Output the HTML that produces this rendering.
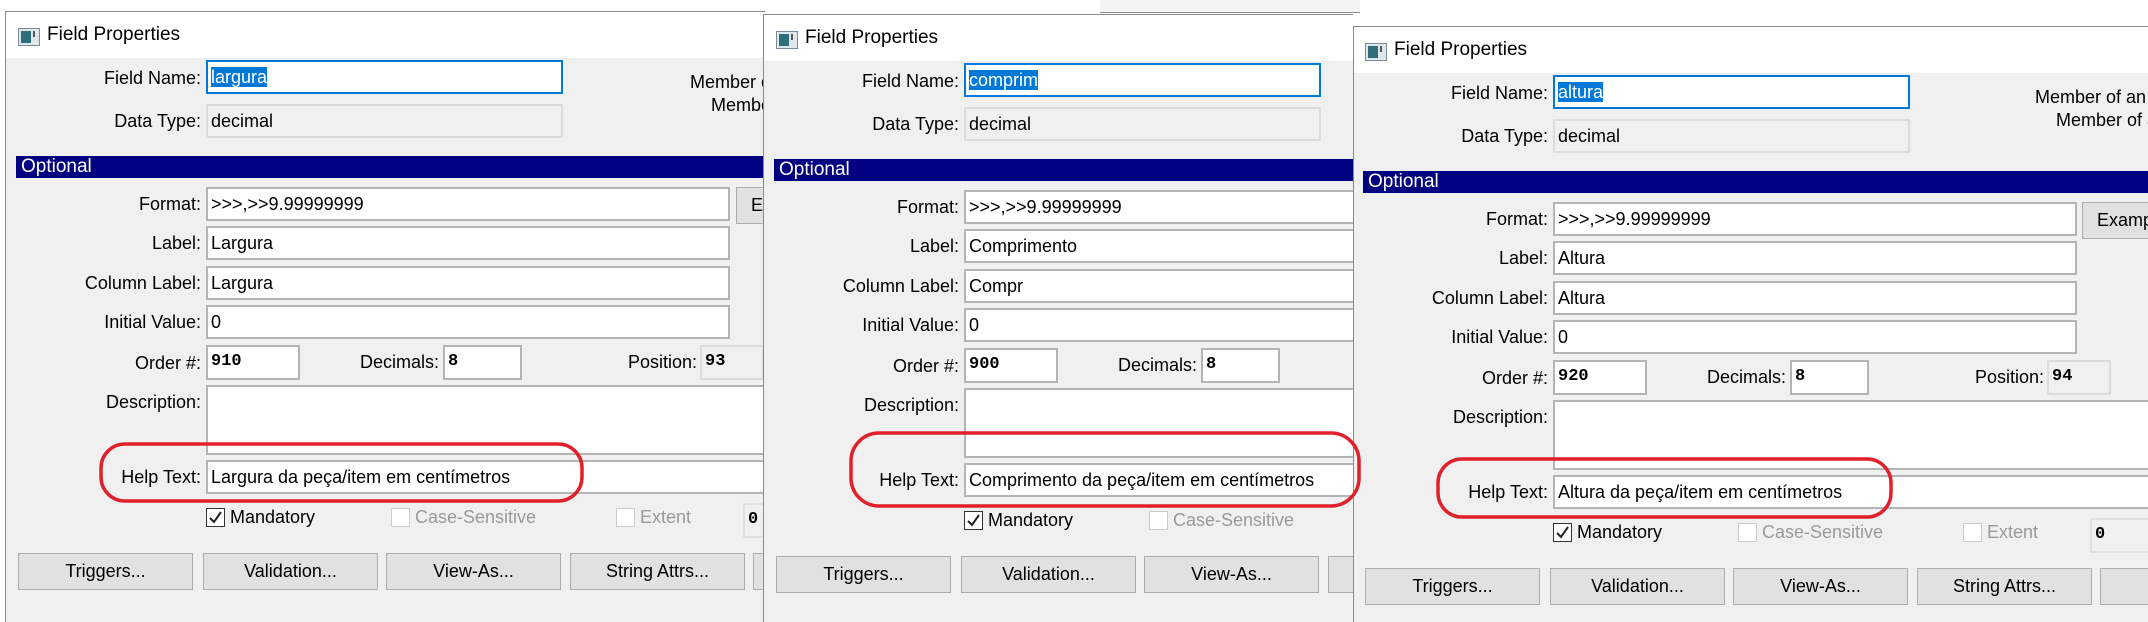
<!DOCTYPE html>
<html><head><meta charset="utf-8"><style>
*{margin:0;padding:0;box-sizing:border-box}
html,body{width:2148px;height:622px;overflow:hidden}
body{position:relative;background:#fff;font-family:"Liberation Sans",Arial,sans-serif;font-size:18px;color:#000}
.win{position:absolute;overflow:hidden;border-left:1px solid #8a8a8a;border-top:1px solid #8a8a8a;background:#f0f0f0}
.in{position:absolute;width:1000px;height:600px}
.a{position:absolute;white-space:nowrap}
.tb{position:absolute;left:0;top:0;width:1000px;height:46px;background:#fff}
.lb{position:absolute;width:200px;left:1px;text-align:right;height:34px;line-height:34px}
.rl{position:absolute;width:150px;text-align:right;height:35px;line-height:35px}
.ip{position:absolute;background:#fff;border:2px solid #b4b4b4;height:34px;line-height:30px;padding-left:3px;white-space:nowrap;overflow:hidden}
.ro{background:#f0f0f0;border:2px solid #dcdcdc}
.bold{font-family:"Liberation Mono",monospace;font-weight:bold;font-size:17px}
.opt{position:absolute;left:16px;top:156px;width:1000px;height:22px;background:#000080;color:#fff;line-height:22px;padding-left:5px;font-size:19px}
.btn{position:absolute;top:553px;width:175px;height:37px;background:#e1e1e1;border:1px solid #adadad;text-align:center;line-height:35px}
.cb{position:absolute;width:19px;height:19px;border:1px solid #333;background:#fff;top:508px}
.cbd{border-color:#ccc}
.gray{color:#9a9a9a}
</style></head><body>
<div class="a" style="left:1100px;top:0;width:260px;height:13px;border-bottom:1px solid #888;background:#f4f4f4"></div>

<!-- panel 1 -->
<div class="win" style="left:5px;top:11px;width:760px;height:611px">
<div class="in" style="left:-6px;top:-12px">
<div class="tb" style="top:12px"></div>
<svg class="a" style="left:18px;top:28px" width="22" height="18"><rect x="0.5" y="0.5" width="21" height="17" fill="#dfe6ec" stroke="#7a8a99"/><rect x="3" y="3" width="10" height="12" fill="#2d6e7a"/><rect x="15" y="3" width="2" height="6" fill="#555"/></svg>
<div class="a" style="left:47px;top:24px;font-size:19px">Field Properties</div>
<div class="lb" style="top:61px">Field Name:</div>
<div class="ip" style="left:206px;top:60px;width:357px;border-color:#0078d7"><span style="background:#0078d7;color:#fff">largura</span></div>
<div class="lb" style="top:104px">Data Type:</div>
<div class="ip ro" style="left:206px;top:104px;width:357px">decimal</div>
<div class="a" style="left:690px;top:72px">Member of an Index</div>
<div class="a" style="left:711px;top:95px">Member of a Word Index</div>
<div class="opt">Optional</div>
<div class="lb" style="top:187px">Format:</div><div class="ip" style="left:206px;top:187px;width:524px">&gt;&gt;&gt;,&gt;&gt;9.99999999</div>
<div class="btn" style="left:736px;top:187px;width:120px;text-align:left;padding-left:14px">Example...</div>
<div class="lb" style="top:226px">Label:</div><div class="ip" style="left:206px;top:226px;width:524px">Largura</div>
<div class="lb" style="top:266px">Column Label:</div><div class="ip" style="left:206px;top:266px;width:524px">Largura</div>
<div class="lb" style="top:305px">Initial Value:</div><div class="ip" style="left:206px;top:305px;width:524px">0</div>
<div class="lb" style="top:346px">Order #:</div><div class="ip bold" style="left:206px;top:345px;width:94px;height:35px">910</div>
<div class="rl" style="left:289px;top:345px">Decimals:</div><div class="ip bold" style="left:443px;top:345px;width:79px;height:35px">8</div>
<div class="rl" style="left:547px;top:345px">Position:</div><div class="ip ro bold" style="left:700px;top:345px;width:64px;height:35px">93</div>
<div class="lb" style="top:385px">Description:</div><div class="ip" style="left:206px;top:385px;width:800px;height:70px"></div>
<div class="lb" style="top:460px">Help Text:</div><div class="ip" style="left:206px;top:460px;width:800px">Largura da peça/item em centímetros</div>
<div class="cb" style="left:206px">
<svg width="17" height="17" style="position:absolute;left:0;top:0"><path d="M3 9 L7 13 L14 3" stroke="#222" stroke-width="2" fill="none"/></svg></div>
<div class="a" style="left:230px;top:507px">Mandatory</div>
<div class="cb cbd" style="left:391px"></div><div class="a gray" style="left:415px;top:507px">Case-Sensitive</div>
<div class="cb cbd" style="left:616px"></div><div class="a gray" style="left:640px;top:507px">Extent</div>
<div class="ip ro bold" style="left:743px;top:503px;width:60px;height:35px;border-color:#e0e0e0">0</div>
<div class="btn" style="left:18px">Triggers...</div>
<div class="btn" style="left:203px">Validation...</div>
<div class="btn" style="left:386px">View-As...</div>
<div class="btn" style="left:570px">String Attrs...</div>
<div class="btn gray" style="left:753px">Delete</div>
</div></div>

<!-- panel 2 -->
<div class="win" style="left:763px;top:14px;width:590px;height:608px">
<div class="in" style="left:-6px;top:-12px">
<div class="tb" style="top:12px"></div>
<svg class="a" style="left:18px;top:28px" width="22" height="18"><rect x="0.5" y="0.5" width="21" height="17" fill="#dfe6ec" stroke="#7a8a99"/><rect x="3" y="3" width="10" height="12" fill="#2d6e7a"/><rect x="15" y="3" width="2" height="6" fill="#555"/></svg>
<div class="a" style="left:47px;top:24px;font-size:19px">Field Properties</div>
<div class="lb" style="top:61px">Field Name:</div>
<div class="ip" style="left:206px;top:60px;width:357px;border-color:#0078d7"><span style="background:#0078d7;color:#fff">comprim</span></div>
<div class="lb" style="top:104px">Data Type:</div>
<div class="ip ro" style="left:206px;top:104px;width:357px">decimal</div>
<div class="opt">Optional</div>
<div class="lb" style="top:187px">Format:</div><div class="ip" style="left:206px;top:187px;width:524px">&gt;&gt;&gt;,&gt;&gt;9.99999999</div>
<div class="lb" style="top:226px">Label:</div><div class="ip" style="left:206px;top:226px;width:524px">Comprimento</div>
<div class="lb" style="top:266px">Column Label:</div><div class="ip" style="left:206px;top:266px;width:524px">Compr</div>
<div class="lb" style="top:305px">Initial Value:</div><div class="ip" style="left:206px;top:305px;width:524px">0</div>
<div class="lb" style="top:346px">Order #:</div><div class="ip bold" style="left:206px;top:345px;width:94px;height:35px">900</div>
<div class="rl" style="left:289px;top:345px">Decimals:</div><div class="ip bold" style="left:443px;top:345px;width:79px;height:35px">8</div>
<div class="lb" style="top:385px">Description:</div><div class="ip" style="left:206px;top:385px;width:800px;height:70px"></div>
<div class="lb" style="top:460px">Help Text:</div><div class="ip" style="left:206px;top:460px;width:800px">Comprimento da peça/item em centímetros</div>
<div class="cb" style="left:206px">
<svg width="17" height="17" style="position:absolute;left:0;top:0"><path d="M3 9 L7 13 L14 3" stroke="#222" stroke-width="2" fill="none"/></svg></div>
<div class="a" style="left:230px;top:507px">Mandatory</div>
<div class="cb cbd" style="left:391px"></div><div class="a gray" style="left:415px;top:507px">Case-Sensitive</div>
<div class="btn" style="left:18px">Triggers...</div>
<div class="btn" style="left:203px">Validation...</div>
<div class="btn" style="left:386px">View-As...</div>
<div class="btn" style="left:570px">String Attrs...</div>
</div></div>

<!-- panel 3 -->
<div class="win" style="left:1353px;top:26px;width:795px;height:596px">
<div class="in" style="left:-7px;top:-12px">
<div class="tb" style="top:12px"></div>
<svg class="a" style="left:18px;top:28px" width="22" height="18"><rect x="0.5" y="0.5" width="21" height="17" fill="#dfe6ec" stroke="#7a8a99"/><rect x="3" y="3" width="10" height="12" fill="#2d6e7a"/><rect x="15" y="3" width="2" height="6" fill="#555"/></svg>
<div class="a" style="left:47px;top:24px;font-size:19px">Field Properties</div>
<div class="lb" style="top:61px">Field Name:</div>
<div class="ip" style="left:206px;top:60px;width:357px;border-color:#0078d7"><span style="background:#0078d7;color:#fff">altura</span></div>
<div class="lb" style="top:104px">Data Type:</div>
<div class="ip ro" style="left:206px;top:104px;width:357px">decimal</div>
<div class="a" style="left:688px;top:72px">Member of an Index</div>
<div class="a" style="left:709px;top:95px">Member of a Word Index</div>
<div class="opt">Optional</div>
<div class="lb" style="top:187px">Format:</div><div class="ip" style="left:206px;top:187px;width:524px">&gt;&gt;&gt;,&gt;&gt;9.99999999</div>
<div class="btn" style="left:735px;top:187px;width:120px;text-align:left;padding-left:14px">Example...</div>
<div class="lb" style="top:226px">Label:</div><div class="ip" style="left:206px;top:226px;width:524px">Altura</div>
<div class="lb" style="top:266px">Column Label:</div><div class="ip" style="left:206px;top:266px;width:524px">Altura</div>
<div class="lb" style="top:305px">Initial Value:</div><div class="ip" style="left:206px;top:305px;width:524px">0</div>
<div class="lb" style="top:346px">Order #:</div><div class="ip bold" style="left:206px;top:345px;width:94px;height:35px">920</div>
<div class="rl" style="left:289px;top:345px">Decimals:</div><div class="ip bold" style="left:443px;top:345px;width:79px;height:35px">8</div>
<div class="rl" style="left:547px;top:345px">Position:</div><div class="ip ro bold" style="left:700px;top:345px;width:64px;height:35px">94</div>
<div class="lb" style="top:385px">Description:</div><div class="ip" style="left:206px;top:385px;width:800px;height:70px"></div>
<div class="lb" style="top:460px">Help Text:</div><div class="ip" style="left:206px;top:460px;width:800px">Altura da peça/item em centímetros</div>
<div class="cb" style="left:206px">
<svg width="17" height="17" style="position:absolute;left:0;top:0"><path d="M3 9 L7 13 L14 3" stroke="#222" stroke-width="2" fill="none"/></svg></div>
<div class="a" style="left:230px;top:507px">Mandatory</div>
<div class="cb cbd" style="left:391px"></div><div class="a gray" style="left:415px;top:507px">Case-Sensitive</div>
<div class="cb cbd" style="left:616px"></div><div class="a gray" style="left:640px;top:507px">Extent</div>
<div class="ip ro bold" style="left:743px;top:503px;width:60px;height:35px;border-color:#e0e0e0">0</div>
<div class="btn" style="left:18px">Triggers...</div>
<div class="btn" style="left:203px">Validation...</div>
<div class="btn" style="left:386px">View-As...</div>
<div class="btn" style="left:570px">String Attrs...</div>
<div class="btn gray" style="left:753px">Delete</div>
</div></div>

<svg class="a" style="left:0;top:0" width="2148" height="622">
<g fill="none" stroke="#e0202a" stroke-width="3.5">
<rect x="101" y="444" width="481" height="57" rx="24" ry="24"/>
<rect x="851" y="433" width="508" height="73" rx="28" ry="28"/>
<rect x="1438" y="459" width="453" height="58" rx="24" ry="24"/>
</g></svg>
</body></html>
